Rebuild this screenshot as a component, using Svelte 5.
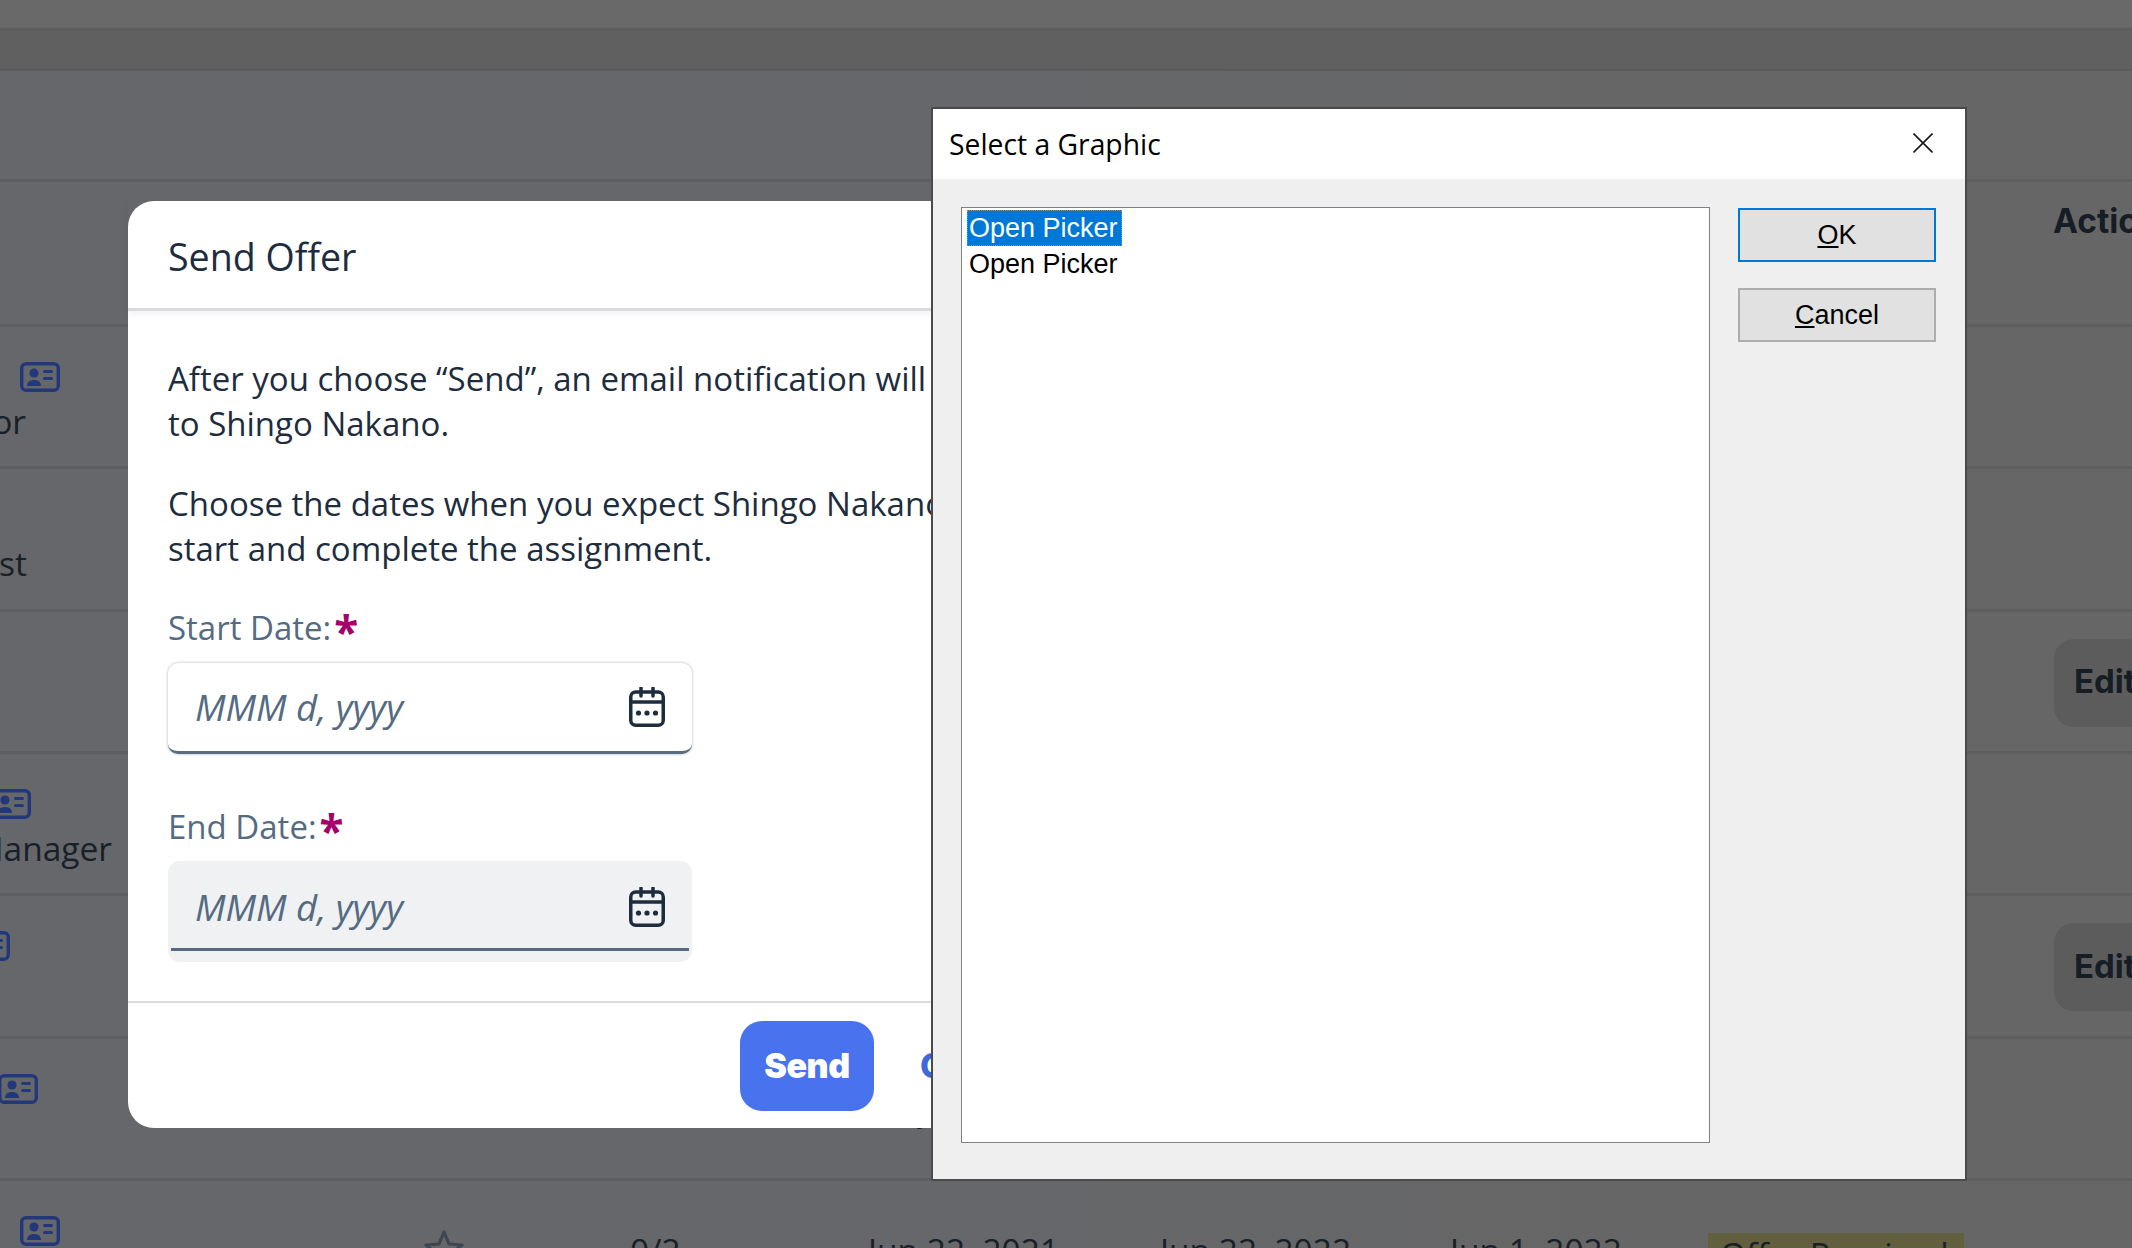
<script>
	const rows = [
		{ iconRight: 60, role: 'Coordinator', roleRight: 26 },
		{ iconRight: -4, role: 'Specialist', roleRight: 27 },
		{ iconRight: -4, role: '', roleRight: 0, edit: true },
		{ iconRight: 31, role: 'Project Manager', roleRight: 112 },
		{ iconRight: 10, role: '', roleRight: 0, edit: true },
		{ iconRight: 38, role: '', roleRight: 0, start: 'May 22, 2021' },
		{
			iconRight: 60,
			role: '',
			roleRight: 0,
			star: true,
			count: '0/2',
			start: 'Jun 22, 2021',
			end: 'Jun 22, 2022',
			due: 'Jun 1, 2022',
			status: 'Offer Received'
		}
	];
</script>

<div class="page">
	<div class="band top"></div>
	<div class="band second"></div>
	<div class="band third"></div>

	<div class="thead">
		<div class="actions-head">Actions</div>
	</div>

	{#each rows as row}
		<div class="row">
			<div class="who">
				<svg class="card" style="margin-left: {row.iconRight - 40}px" width="40" height="30" viewBox="0 0 40 30">
					<rect x="1.7" y="1.7" width="36.6" height="26.6" rx="4.5" fill="none" stroke="#22387a" stroke-width="3.4" />
					<circle cx="14" cy="11" r="4.6" fill="#22387a" />
					<path d="M7 24c0-4 3-6 7-6s7 2 7 6z" fill="#22387a" />
					<rect x="23" y="8" width="10" height="3" rx="1.5" fill="#22387a" />
					<rect x="23" y="15" width="10" height="3" rx="1.5" fill="#22387a" />
				</svg>
				{#if row.role}
					<div class="role" style="width: {row.roleRight}px"><span>{row.role}</span></div>
				{/if}
			</div>
			<div class="cell">
				{#if row.star}
					<svg class="star" width="40" height="40" viewBox="0 0 40 40">
						<path d="M20 3l5 12 13 1-10 8 3 13-11-7-11 7 3-13L2 16l13-1z" fill="none" stroke="#3d4651" stroke-width="3.2" stroke-linejoin="round" />
					</svg>
				{/if}
			</div>
			<div class="cell text">{row.count ?? ''}</div>
			<div class="cell text">{row.start ?? ''}</div>
			<div class="cell text">{row.end ?? ''}</div>
			<div class="cell text">{row.due ?? ''}</div>
			<div class="cell text">
				{#if row.status}<span class="status">{row.status}</span>{/if}
			</div>
			<div class="cell">
				{#if row.edit}<button class="edit">Edit</button>{/if}
			</div>
		</div>
	{/each}

	<div class="modal">
		<header>Send Offer</header>
		<div class="modal-body">
			<p>After you choose “Send”, an email notification will be sent<br />to Shingo Nakano.</p>
			<p>Choose the dates when you expect Shingo Nakano to<br />start and complete the assignment.</p>
			<div class="label">Start Date:<span class="req">*</span></div>
			<div class="field">
				<span class="placeholder">MMM d, yyyy</span>
				<svg width="36" height="40" viewBox="0 0 36 40">
					<rect x="1.75" y="5" width="32.5" height="33.2" rx="5" fill="none" stroke="#1d2d3e" stroke-width="3.5" />
					<path d="M2 15h32M12 1v8M24 1v8" fill="none" stroke="#1d2d3e" stroke-width="3.5" stroke-linecap="round" />
					<circle cx="9.5" cy="26" r="2.6" fill="#1d2d3e" />
					<circle cx="18" cy="26" r="2.6" fill="#1d2d3e" />
					<circle cx="26.5" cy="26" r="2.6" fill="#1d2d3e" />
				</svg>
			</div>
			<div class="label second-label">End Date:<span class="req">*</span></div>
			<div class="field disabled">
				<span class="placeholder">MMM d, yyyy</span>
				<svg width="36" height="40" viewBox="0 0 36 40">
					<rect x="1.75" y="5" width="32.5" height="33.2" rx="5" fill="none" stroke="#1d2d3e" stroke-width="3.5" />
					<path d="M2 15h32M12 1v8M24 1v8" fill="none" stroke="#1d2d3e" stroke-width="3.5" stroke-linecap="round" />
					<circle cx="9.5" cy="26" r="2.6" fill="#1d2d3e" />
					<circle cx="18" cy="26" r="2.6" fill="#1d2d3e" />
					<circle cx="26.5" cy="26" r="2.6" fill="#1d2d3e" />
				</svg>
			</div>
		</div>
		<footer>
			<button class="send">Send</button>
			<button class="cancel-link">Cancel</button>
		</footer>
	</div>

	<div class="native">
		<div class="native-title">
			<span>Select a Graphic</span>
			<svg width="20" height="20" viewBox="0 0 20 20">
				<path d="M0.5 0.5l19 19M19.5 0.5l-19 19" fill="none" stroke="#1a1a1a" stroke-width="1.6" />
			</svg>
		</div>
		<div class="native-body">
			<div class="list">
				<div class="item selected">Open Picker</div>
				<div class="item">Open Picker</div>
			</div>
			<div class="buttons">
				<button class="win focus"><u>O</u>K</button>
				<button class="win"><u>C</u>ancel</button>
			</div>
		</div>
	</div>
</div>

<style>
	:global(body) {
		margin: 0;
		overflow: hidden;
		background: #666;
	}

	.page {
		position: relative;
		width: 2132px;
		height: 1248px;
		overflow: hidden;
		font-family: "Open Sans", "Noto Sans", sans-serif;
		background: linear-gradient(90deg, #65676a, #66676a 45%, #666666 80%);
	}

	.band {
		box-sizing: border-box;
	}

	.top {
		height: 30px;
		background: #696969;
		border-bottom: 2px solid #5c5c5c;
	}

	.second {
		height: 41px;
		background: #5f605f;
		border-bottom: 2px solid #5b5b5b;
	}

	.third {
		height: 111px;
		border-bottom: 3px solid #5d5e5f;
	}

	.thead {
		box-sizing: border-box;
		height: 145px;
		padding: 20px 0 0 2053px;
		border-bottom: 3px solid #5d5e5f;
	}

	.actions-head {
		font-family: Inter, sans-serif;
		font-weight: 700;
		font-size: 33.5px;
		line-height: 38px;
		white-space: nowrap;
		color: #171d25;
	}

	.row {
		box-sizing: border-box;
		display: grid;
		grid-template-columns: 424px 206px 238px 292px 290px 258px 346px 78px;
		height: 142.33px;
		border-bottom: 3px solid #5d5e5f;
	}

	.who {
		padding-top: 35px;
	}

	.card {
		display: block;
	}

	.role {
		display: flex;
		justify-content: flex-end;
		margin-top: 9px;
		font-size: 33.5px;
		line-height: 40px;
		white-space: nowrap;
		color: #1a2027;
	}

	.cell {
		min-width: 0;
	}

	.text {
		padding-top: 48px;
		font-size: 33.5px;
		line-height: 42px;
		white-space: nowrap;
		color: #1a2027;
	}

	.star {
		display: block;
		margin-top: 48px;
	}

	.status {
		display: inline-block;
		width: 256px;
		box-sizing: border-box;
		padding: 0 12px;
		margin-top: 4px;
		background: #625f3e;
	}

	.edit {
		margin-top: 27px;
		height: 88px;
		width: 120px;
		padding: 0 0 3px 20px;
		border: none;
		border-radius: 20px;
		text-align: left;
		background: #5c5c5c;
		font-family: Inter, sans-serif;
		font-weight: 700;
		font-size: 33px;
		color: #171d25;
	}

	.modal {
		position: absolute;
		left: 128px;
		top: 201px;
		width: 960px;
		height: 927px;
		display: flex;
		flex-direction: column;
		background: #fff;
		border-radius: 26px;
		color: #1d2d3e;
	}

	header {
		box-sizing: border-box;
		height: 110px;
		padding: 32px 40px 0;
		font-size: 37.6px;
		line-height: 48px;
		border-bottom: 3px solid #d9dadd;
		box-shadow: 0 3px 6px rgba(30, 40, 60, 0.06);
	}

	.modal-body {
		flex: 1;
		padding: 45px 40px 0;
	}

	p {
		margin: 0 0 35px;
		font-size: 33px;
		line-height: 45px;
		white-space: nowrap;
	}

	.label {
		display: flex;
		align-items: flex-start;
		margin-top: 3px;
		font-size: 33px;
		line-height: 44px;
		color: #556b82;
	}

	.second-label {
		margin-top: 51px;
	}

	.req {
		margin-left: 3px;
		padding-top: 3px;
		font-size: 44px;
		line-height: 44px;
		font-weight: 700;
		color: #a5006b;
	}

	.field {
		box-sizing: border-box;
		width: 524px;
		height: 91px;
		margin-top: 10px;
		padding: 0 27px;
		display: flex;
		align-items: center;
		justify-content: space-between;
		border-radius: 10px;
		background: #fff;
		border-bottom: 3px solid #5b6b80;
		box-shadow: 0 0 3px rgba(60, 80, 110, 0.45);
	}

	.disabled {
		position: relative;
		height: 101px;
		margin-top: 9px;
		padding-bottom: 9px;
		background: #eff1f2;
		border-bottom: none;
		border-radius: 12px;
		box-shadow: none;
	}

	.disabled::after {
		content: "";
		position: absolute;
		left: 3px;
		right: 3px;
		bottom: 11px;
		height: 3px;
		background: #556b81;
	}

	.placeholder {
		font-style: italic;
		font-size: 36.5px;
		color: #556b82;
	}

	footer {
		box-sizing: border-box;
		height: 127px;
		display: flex;
		align-items: center;
		padding: 0 0 0 612px;
		gap: 46px;
		border-top: 2px solid #dcdcdc;
	}

	.send {
		width: 134px;
		height: 90px;
		border: none;
		border-radius: 22px;
		background: #4872ee;
		font-family: Inter, sans-serif;
		font-weight: 900;
		font-size: 34px;
		letter-spacing: -0.5px;
		color: #fff;
	}

	.cancel-link {
		border: none;
		padding: 0;
		background: none;
		font-family: Inter, sans-serif;
		font-weight: 800;
		font-size: 34px;
		color: #3f68dc;
	}

	.native {
		position: absolute;
		left: 931px;
		top: 107px;
		box-sizing: border-box;
		width: 1036px;
		height: 1074px;
		display: flex;
		flex-direction: column;
		border: 2px solid #4a4a4a;
		background: #efefef;
	}

	.native-title {
		height: 70px;
		flex-shrink: 0;
		display: flex;
		align-items: center;
		justify-content: space-between;
		padding: 0 32px 0 16px;
		box-sizing: border-box;
		background: #fff;
		font-family: "Open Sans", sans-serif;
		font-size: 28.3px;
		color: #000;
	}

	.native-title svg {
		margin-bottom: 2px;
	}

	.native-body {
		flex: 1;
		display: flex;
		padding: 28px 29px 36px 28px;
		gap: 28px;
	}

	.list {
		box-sizing: border-box;
		width: 749px;
		padding: 2px 5px;
		background: #fff;
		border: 1px solid #7f7f88;
		font-family: "Liberation Sans", Arial, sans-serif;
		font-size: 27px;
		line-height: 36px;
	}

	.item {
		width: max-content;
		padding: 0 4px 0 2px;
		color: #000;
	}

	.selected {
		background: #0078d7;
		color: #fff;
		outline: 1px dotted #c9863a;
		outline-offset: -1px;
	}

	.buttons {
		display: flex;
		flex-direction: column;
		gap: 26px;
		padding-top: 1px;
	}

	.win {
		box-sizing: border-box;
		width: 198px;
		height: 54px;
		padding: 0;
		background: #e1e1e1;
		border: 2px solid #adadad;
		font-family: "Liberation Sans", Arial, sans-serif;
		font-size: 27px;
		color: #000;
	}

	.focus {
		border-color: #0078d7;
	}
</style>
